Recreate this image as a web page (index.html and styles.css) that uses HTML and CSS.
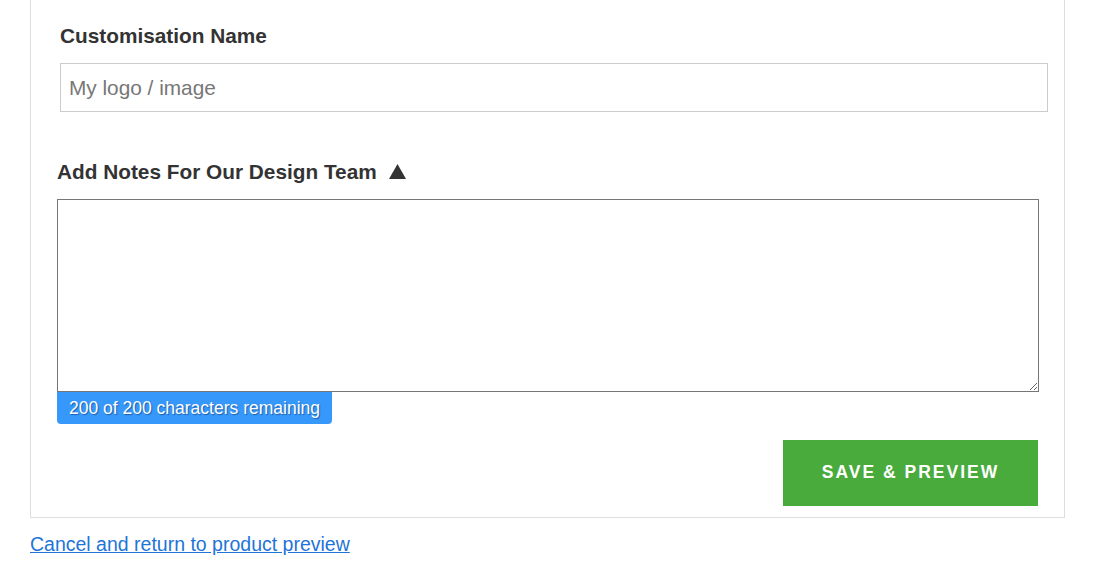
FILE: index.html
```html
<!DOCTYPE html>
<html lang="en">
<head>
  <meta charset="UTF-8" />
  <meta name="viewport" content="width=device-width, initial-scale=1.0"/>
  <title>Customise Product</title>
  <link rel="stylesheet" href="styles.css">
</head>
<body>

  <!-- Customisation panel -->
  <div class="page">
    <div class="panel">

      <div class="field name-field">
        <label for="custom-name">Customisation Name</label>
        <input type="text" id="custom-name" placeholder="My logo / image" />
      </div>

      <div class="field notes-field">
        <label for="notes" class="notes-toggle">
          Add Notes For Our Design Team
          <svg class="arrow" width="17" height="15" viewBox="0 0 17 15" aria-hidden="true">
            <polygon points="8.5,0 17,15 0,15" fill="#333" />
          </svg>
        </label>
        <textarea id="notes" maxlength="200"></textarea>
        <span class="counter" id="counter">200 of 200 characters remaining</span>
      </div>

      <div class="actions">
        <button class="save">Save &amp; Preview</button>
      </div>
    </div>

    <a class="cancel" href="#">Cancel and return to product preview</a>
  </div>

</body>
</html>
```

FILE: styles.css
```css
* {
  box-sizing: border-box;
}

body {
  font-family: 'Liberation Sans', Arial, Helvetica, sans-serif;
  background: #fff;
  color: #333;
  margin: 0;
  padding: 0;
}

.page {
  padding: 0 30px;
}

.panel {
  width: 1035px;
  margin-top: -12px;
  padding: 35px 25px 11px 26px;
  border: 1px solid #ddd;
}

.field label {
  display: block;
  font-size: 20.8px;
  font-weight: bold;
  color: #333;
}

.name-field {
  margin: 0 -9px 0 3px;
}

.name-field input {
  display: block;
  width: 100%;
  height: 49px;
  margin-top: 15px;
  padding: 0 8px;
  border: 1px solid #ccc;
  font-family: inherit;
  font-size: 20.8px;
  color: #333;
}

.name-field input::placeholder {
  color: #777;
}

.notes-field {
  margin-top: 48px;
}

.field .notes-toggle {
  display: flex;
  align-items: center;
  gap: 12px;
  cursor: pointer;
}

.arrow {
  display: block;
  margin-top: -1px;
}

.notes-field textarea {
  display: block;
  width: 100%;
  height: 193px;
  margin-top: 15px;
  border: 1px solid #767676;
  font-family: inherit;
  font-size: 16px;
}

.counter {
  display: inline-block;
  height: 32px;
  line-height: 32px;
  padding: 0 12px;
  background-color: #3798fb;
  color: #fff;
  font-size: 17.5px;
  text-shadow: 1px 1px 1px #1d5fae;
  border-radius: 0 0 4px 4px;
}

.actions {
  display: flex;
  justify-content: flex-end;
  margin-top: 16px;
}

.save {
  width: 255px;
  height: 66px;
  margin-right: 1px;
  padding-bottom: 2px;
  border: none;
  background-color: #4aab3d;
  color: #fff;
  font-family: inherit;
  font-size: 17.5px;
  font-weight: bold;
  letter-spacing: 2px;
  text-transform: uppercase;
  cursor: pointer;
}

.save:hover {
  background-color: #3f9633;
}

.cancel {
  display: inline-block;
  margin-top: 15px;
  font-size: 19.5px;
  color: #1f74d8;
}
```
